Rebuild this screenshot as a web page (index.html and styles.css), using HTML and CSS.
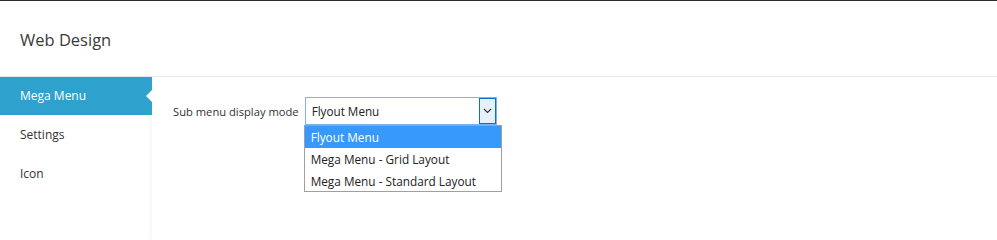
FILE: index.html
```html
<!DOCTYPE html>
<html>
<head>
<meta charset="utf-8">
<link rel="stylesheet" href="styles.css">
</head>
<body>
<div class="page">
  <header class="header">Web Design</header>
  <div class="main">
    <nav class="sidebar">
      <div class="nav-item active">Mega Menu<span class="notch"></span></div>
      <div class="nav-item">Settings</div>
      <div class="nav-item">Icon</div>
    </nav>
    <section class="content">
      <div class="field">
        <label class="label">Sub menu display mode</label>
        <div class="select-wrap">
          <div class="select">
            <span class="select-value">Flyout Menu</span>
            <span class="select-btn">
              <svg width="9" height="6" viewBox="0 0 9 6"><path d="M1 1 L4.5 4.5 L8 1" fill="none" stroke="#333" stroke-width="1.1"/></svg>
            </span>
          </div>
          <ul class="dropdown">
            <li class="opt selected">Flyout Menu</li>
            <li class="opt">Mega Menu - Grid Layout</li>
            <li class="opt">Mega Menu - Standard Layout</li>
          </ul>
        </div>
      </div>
    </section>
  </div>
</div>
</body>
</html>
```
FILE: styles.css
```css
html, body {
  margin: 0;
  padding: 0;
  background: #fff;
}
body {
  font-family: "Open Sans", "Noto Sans", sans-serif;
  color: #333;
}
.page {
  border-top: 1px solid #2b2b2b;
  height: 239px;
  overflow: hidden;
}
.header {
  height: 76px;
  box-sizing: border-box;
  padding-left: 20px;
  padding-top: 2px;
  display: flex;
  align-items: center;
  font-size: 16.5px;
  color: #3a3a3a;
  border-bottom: 1px solid #e8e8e8;
}
.main {
  display: flex;
  height: 163px;
}
.sidebar {
  width: 152px;
  flex: none;
  background: #fff;
  box-shadow: inset -4px 0 4px -2px rgba(0,0,0,0.045);
}
.nav-item {
  position: relative;
  height: 38px;
  line-height: 38px;
  padding-left: 20px;
  font-size: 12px;
  color: #333;
  margin-bottom: 1px;
}
.nav-item.active {
  background: #2ea1cc;
  color: #fff;
}
.notch {
  position: absolute;
  right: 0;
  top: 13px;
  width: 0;
  height: 0;
  border-top: 6px solid transparent;
  border-bottom: 6px solid transparent;
  border-right: 6px solid #fff;
}
.content {
  flex: 1;
  padding: 20px 0 0 21px;
}
.field {
  display: flex;
  align-items: center;
  gap: 6px;
}
.label {
  font-size: 11.2px;
  color: #333;
}
.select-wrap {
  position: relative;
}
.select {
  width: 192px;
  height: 28px;
  box-sizing: border-box;
  border: 1px solid #7eb4ea;
  display: flex;
  align-items: center;
  background: #fff;
}
.select-value {
  flex: 1;
  padding-left: 6px;
  font-size: 11.7px;
  color: #222;
}
.select-btn {
  width: 17px;
  height: 26px;
  box-sizing: border-box;
  border: 1px solid #0a6fd0;
  background: #e5f1fb;
  display: flex;
  align-items: center;
  justify-content: center;
}
.dropdown {
  position: absolute;
  left: -1px;
  top: 28px;
  width: 198px;
  box-sizing: border-box;
  margin: 0;
  padding: 0;
  list-style: none;
  border: 1px solid #a0a0a0;
  background: #fff;
}
.opt {
  height: 22px;
  line-height: 22px;
  padding-left: 6px;
  font-size: 11.8px;
  color: #222;
}
.opt:last-child {
  height: 21px;
}
.opt.selected {
  background: #3799fb;
  color: #fff;
}
```
